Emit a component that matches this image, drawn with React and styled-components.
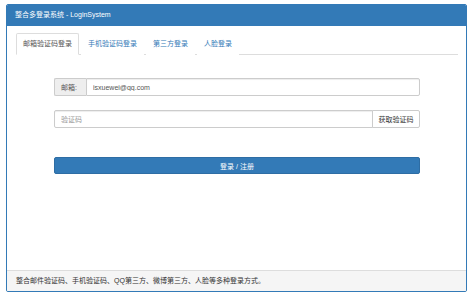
import React, { useState } from "react";
import styled, { createGlobalStyle } from "styled-components";

const GlobalStyle = createGlobalStyle`
  html, body {
    margin: 0;
    padding: 0;
    background: #fff;
  }
  body {
    font-family: "Liberation Sans", Arial, "Noto Sans CJK SC", sans-serif;
    color: #333;
  }
`;

const Page = styled.div`
  padding: 4px 7px 0 6px;
`;

const Panel = styled.div`
  height: 288px;
  box-sizing: border-box;
  display: flex;
  flex-direction: column;
  border: 1px solid #337ab7;
  border-radius: 2px;
  background: #fff;
  box-shadow: 0 1px 1px rgba(0, 0, 0, 0.05);
  overflow: hidden;
`;

const PanelHeading = styled.div`
  height: 20px;
  line-height: 20px;
  padding: 0 8px;
  background: #337ab7;
  border-bottom: 1px solid #337ab7;
  color: #fff;
  font-size: 7px;
`;

const PanelBody = styled.div`
  flex: 1;
  padding: 7px 8px 0 9px;
`;

const TabList = styled.ul`
  display: flex;
  list-style: none;
  margin: 0;
  padding: 0;
  border-bottom: 1px solid #ddd;
`;

const Tab = styled.li`
  height: 20px;
  line-height: 20px;
  padding: 0 6px;
  margin-right: 2px;
  margin-bottom: -1px;
  font-size: 7px;
  cursor: pointer;
  border: 1px solid ${(p) => (p.$active ? "#ddd" : "transparent")};
  border-bottom-color: ${(p) => (p.$active ? "#fff" : "transparent")};
  border-radius: 2px 2px 0 0;
  background: #fff;
  color: ${(p) => (p.$active ? "#555" : "#337ab7")};
`;

const Form = styled.form`
  margin: 23px 38px 0 38px;
  display: flex;
  flex-direction: column;
`;

const InputGroup = styled.div`
  display: flex;
  height: 18px;
  margin-bottom: 14px;
`;

const Addon = styled.span`
  width: 32px;
  box-sizing: border-box;
  padding-left: 6px;
  display: flex;
  align-items: center;
  font-size: 7px;
  color: #555;
  background: #eee;
  border: 1px solid #ccc;
  border-right: none;
  border-radius: 2px 0 0 2px;
`;

const Input = styled.input`
  flex: 1;
  min-width: 0;
  box-sizing: border-box;
  height: 100%;
  padding: 0 6px;
  font-family: inherit;
  font-size: 7px;
  color: #555;
  border: 1px solid #ccc;
  border-radius: ${(p) => p.$radius || "2px"};
  box-shadow: inset 0 1px 1px rgba(0, 0, 0, 0.075);
  outline: none;

  &::placeholder {
    color: #999;
  }
`;

const AddonButton = styled.button`
  width: 48px;
  box-sizing: border-box;
  height: 100%;
  margin-left: -1px;
  padding: 0;
  font-family: inherit;
  font-size: 7px;
  color: #333;
  background: #fff;
  border: 1px solid #ccc;
  border-radius: 0 2px 2px 0;
  cursor: pointer;
`;

const PrimaryButton = styled.button`
  margin-top: 15px;
  height: 17px;
  padding: 0;
  font-family: inherit;
  font-size: 7px;
  color: #fff;
  background: #337ab7;
  border: 1px solid #2e6da4;
  border-radius: 2px;
  cursor: pointer;
`;

const PanelFooter = styled.div`
  height: 20px;
  line-height: 20px;
  padding: 0 9px;
  background: #f5f5f5;
  border-top: 1px solid #ddd;
  font-size: 7px;
  color: #333;
`;

const tabs = ["邮箱验证码登录", "手机验证码登录", "第三方登录", "人脸登录"];

export default function App() {
  const [active, setActive] = useState(0);

  return (
    <>
      <GlobalStyle />
      <Page>
        <Panel>
          <PanelHeading>整合多登录系统 - LoginSystem</PanelHeading>
          <PanelBody>
            <TabList>
              {tabs.map((t, i) => (
                <Tab key={t} $active={i === active} onClick={() => setActive(i)}>
                  {t}
                </Tab>
              ))}
            </TabList>
            <Form onSubmit={(e) => e.preventDefault()}>
              <InputGroup>
                <Addon>邮箱:</Addon>
                <Input $radius="0 2px 2px 0" defaultValue="isxuewei@qq.com" />
              </InputGroup>
              <InputGroup>
                <Input $radius="2px 0 0 2px" placeholder="验证码" />
                <AddonButton type="button">获取验证码</AddonButton>
              </InputGroup>
              <PrimaryButton type="submit">登录 / 注册</PrimaryButton>
            </Form>
          </PanelBody>
          <PanelFooter>
            整合邮件验证码、手机验证码、QQ第三方、微博第三方、人脸等多种登录方式。
          </PanelFooter>
        </Panel>
      </Page>
    </>
  );
}
